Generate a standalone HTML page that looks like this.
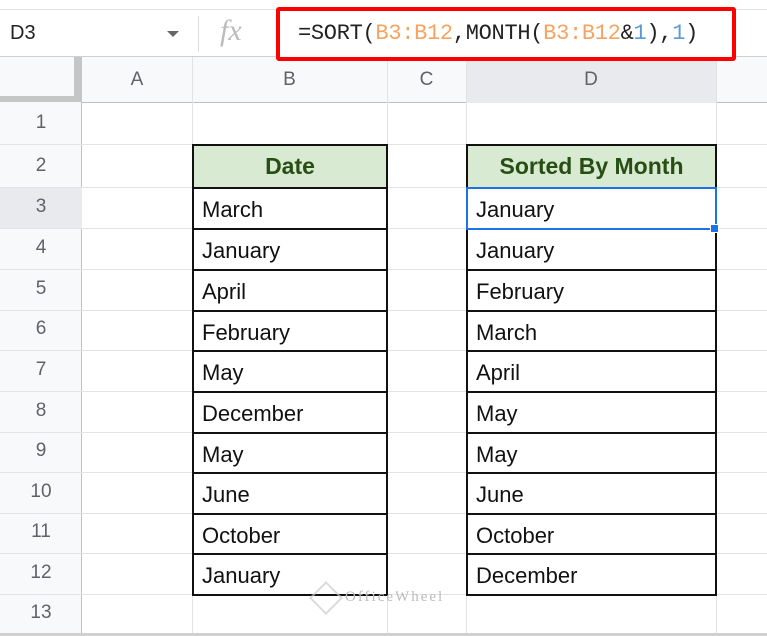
<!DOCTYPE html>
<html><head><style>
body{margin:0;width:767px;height:636px;overflow:hidden;background:#fff;font-family:"Liberation Sans",sans-serif;position:relative}
div{position:absolute;box-sizing:border-box}
.vl{width:1px;background:#e2e3e3}
.hl{height:1px;background:#e2e3e3}
.rh{left:0;width:82px;text-align:center;color:#5f6368;font-size:19px}
.ch{top:57px;height:46px;line-height:46px;text-align:center;color:#5f6368;font-size:19px}
.c{font-size:22px;color:#111;padding-left:8px;line-height:42px;border:2px solid #111;background:#fff}
.h{background:#d9ead3;color:#274e13;font-weight:bold;text-align:center;padding-left:0;font-size:23px}
</style></head><body>
<div style="left:0;top:0;width:767px;height:10px;background:#fff;border-bottom:1px solid #e2e3e3"></div>
<div style="left:10px;top:22px;font-size:20px;color:#222">D3</div>
<div style="left:167px;top:31px;width:0;height:0;border-left:6px solid transparent;border-right:6px solid transparent;border-top:6px solid #666"></div>
<div style="left:198px;top:16px;width:1px;height:36px;background:#ddd"></div>
<div style="left:220px;top:14px;font-family:'Liberation Serif',serif;font-style:italic;font-size:30px;color:#bbb">fx</div>
<div style="left:0;top:56px;width:767px;height:1px;background:#d0d0d0"></div>
<div style="left:0;top:57px;width:767px;height:46px;background:#f8f9fa;border-bottom:1px solid #c0c0c0"></div>
<div style="left:0;top:57px;width:82px;height:579px;background:#f8f9fa;border-right:1px solid #c0c0c0"></div>
<div style="left:74px;top:57px;width:8px;height:42px;background:#c4c7c5"></div>
<div style="left:0;top:96px;width:82px;height:6px;background:#c4c7c5"></div>
<div style="left:466px;top:57px;width:250px;height:46px;background:#e8eaed"></div>
<div style="left:0;top:187px;width:82px;height:41px;background:#e8eaed"></div>
<div class="ch" style="left:82px;width:110px">A</div>
<div class="ch" style="left:192px;width:195px">B</div>
<div class="ch" style="left:387px;width:79px">C</div>
<div class="ch" style="left:466px;width:250px">D</div>
<div class="vl" style="left:192px;top:57px;height:579px"></div>
<div class="vl" style="left:387px;top:57px;height:579px"></div>
<div class="vl" style="left:466px;top:57px;height:579px"></div>
<div class="vl" style="left:716px;top:57px;height:579px"></div>
<!-- formula box on top -->
<div style="left:276px;top:7px;width:460px;height:54px;border:4px solid #f00;border-radius:3px;background:#fff"></div>
<div style="left:298px;top:21px;font-size:22px;color:#222;font-family:'Liberation Mono',monospace;letter-spacing:-0.3px">=SORT(<span style="color:#f4a460">B3:B12</span>,MONTH(<span style="color:#f4a460">B3:B12</span>&amp;<span style="color:#5b9bd5">1</span>),<span style="color:#5b9bd5">1</span>)</div>
<div class="hl" style="left:0;top:144px;width:767px"></div>
<div class="hl" style="left:0;top:187px;width:767px"></div>
<div class="hl" style="left:0;top:228px;width:767px"></div>
<div class="hl" style="left:0;top:269px;width:767px"></div>
<div class="hl" style="left:0;top:310px;width:767px"></div>
<div class="hl" style="left:0;top:350px;width:767px"></div>
<div class="hl" style="left:0;top:391px;width:767px"></div>
<div class="hl" style="left:0;top:432px;width:767px"></div>
<div class="hl" style="left:0;top:472px;width:767px"></div>
<div class="hl" style="left:0;top:513px;width:767px"></div>
<div class="hl" style="left:0;top:553px;width:767px"></div>
<div class="hl" style="left:0;top:594px;width:767px"></div>
<div class="hl" style="left:0;top:633px;width:767px;height:3px;background:#d0d0d0"></div>
<div class="rh" style="top:112px">1</div>
<div class="rh" style="top:155px">2</div>
<div class="rh" style="top:196px">3</div>
<div class="rh" style="top:237px">4</div>
<div class="rh" style="top:278px">5</div>
<div class="rh" style="top:318px">6</div>
<div class="rh" style="top:359px">7</div>
<div class="rh" style="top:400px">8</div>
<div class="rh" style="top:440px">9</div>
<div class="rh" style="top:481px">10</div>
<div class="rh" style="top:521px">11</div>
<div class="rh" style="top:562px">12</div>
<div class="rh" style="top:602px">13</div>
<div class="c h" style="left:192px;top:144px;width:196px;height:45px;line-height:41px">Date</div>
<div class="c" style="left:192px;top:187px;width:196px;height:43px">March</div>
<div class="c" style="left:192px;top:228px;width:196px;height:43px">January</div>
<div class="c" style="left:192px;top:269px;width:196px;height:43px">April</div>
<div class="c" style="left:192px;top:310px;width:196px;height:42px">February</div>
<div class="c" style="left:192px;top:350px;width:196px;height:43px">May</div>
<div class="c" style="left:192px;top:391px;width:196px;height:43px">December</div>
<div class="c" style="left:192px;top:432px;width:196px;height:42px">May</div>
<div class="c" style="left:192px;top:472px;width:196px;height:43px">June</div>
<div class="c" style="left:192px;top:513px;width:196px;height:42px">October</div>
<div class="c" style="left:192px;top:553px;width:196px;height:43px">January</div>
<div class="c h" style="left:466px;top:144px;width:251px;height:45px;line-height:41px">Sorted By Month</div>
<div class="c" style="left:466px;top:187px;width:251px;height:43px">January</div>
<div class="c" style="left:466px;top:228px;width:251px;height:43px">January</div>
<div class="c" style="left:466px;top:269px;width:251px;height:43px">February</div>
<div class="c" style="left:466px;top:310px;width:251px;height:42px">March</div>
<div class="c" style="left:466px;top:350px;width:251px;height:43px">April</div>
<div class="c" style="left:466px;top:391px;width:251px;height:43px">May</div>
<div class="c" style="left:466px;top:432px;width:251px;height:42px">May</div>
<div class="c" style="left:466px;top:472px;width:251px;height:43px">June</div>
<div class="c" style="left:466px;top:513px;width:251px;height:42px">October</div>
<div class="c" style="left:466px;top:553px;width:251px;height:43px">December</div>
<div style="left:466px;top:187px;width:251px;height:43px;border:2px solid #1a73e8"></div>
<div style="left:710px;top:224px;width:9px;height:9px;background:#1a73e8;border:1px solid #fff"></div>
<div style="left:314px;top:586px;width:24px;height:24px;border:2px solid #ccc;transform:rotate(45deg);opacity:.7"></div>
<div style="left:345px;top:589px;font-family:'Liberation Serif',serif;font-size:15px;letter-spacing:2px;color:#bbb">OfficeWheel</div>
</body></html>
